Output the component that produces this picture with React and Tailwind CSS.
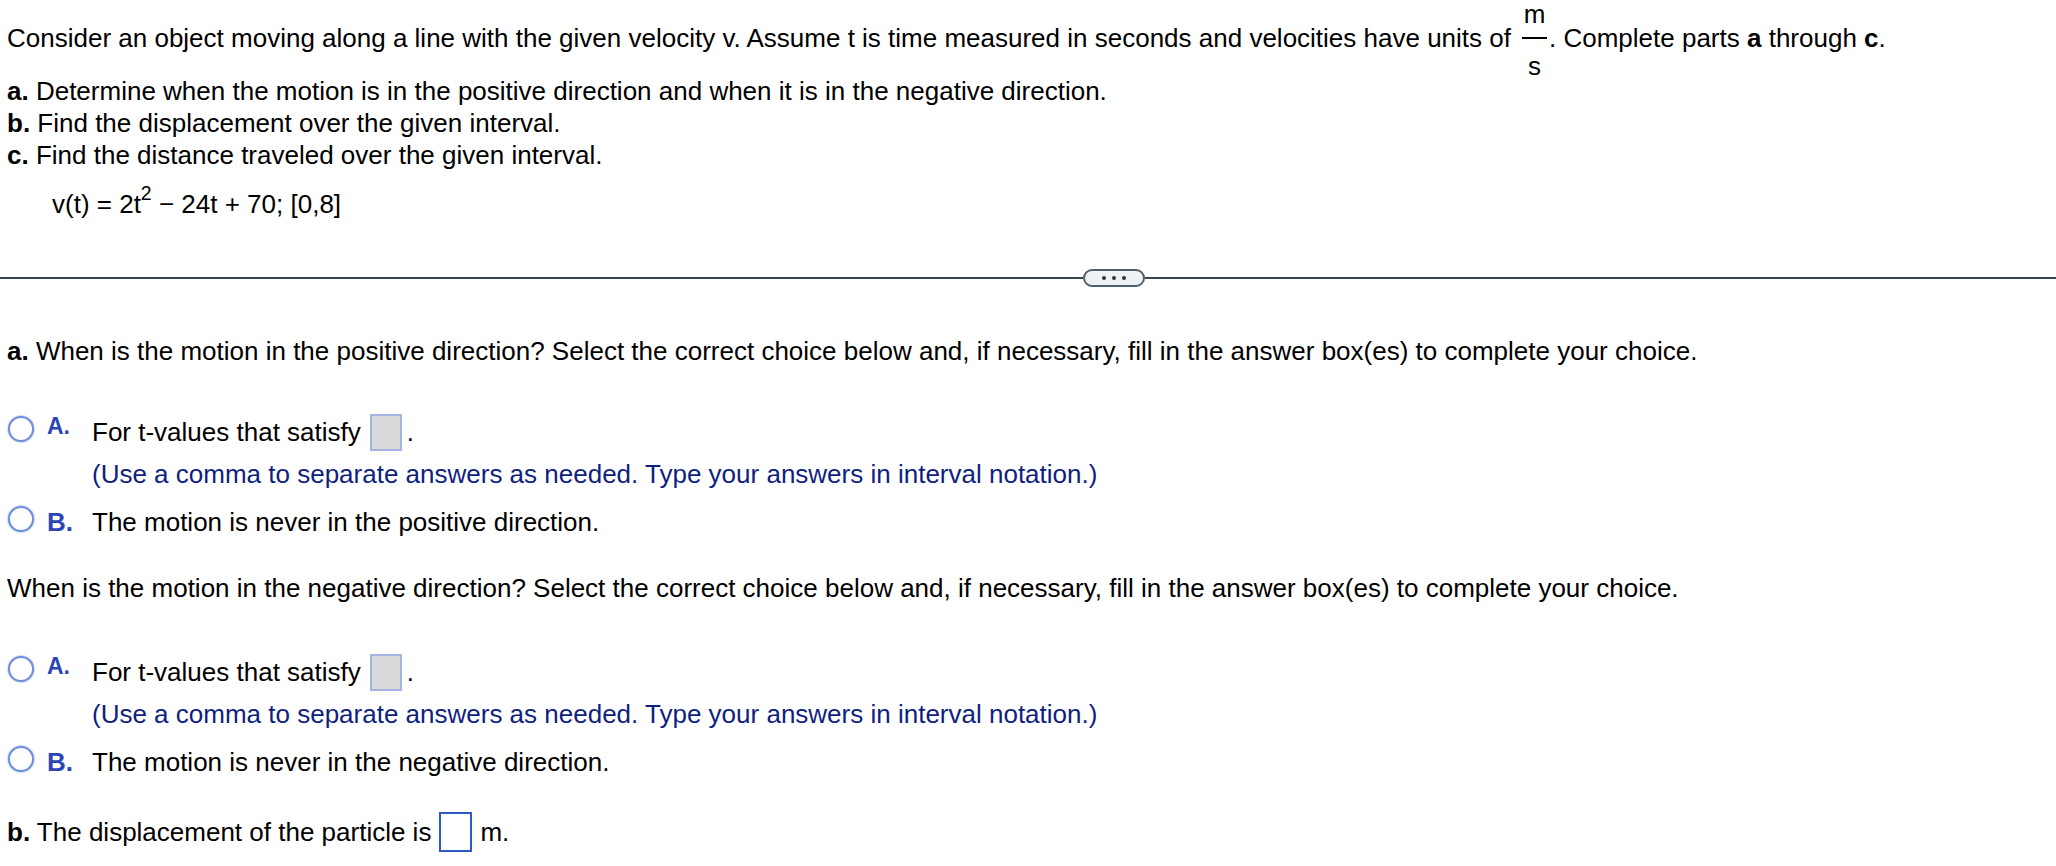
import React from 'react';

const Radio = () => (
    <span className="mb-[6px] ml-[1px] block h-[26px] w-[26px] shrink-0 rounded-full border-[2.5px] border-[#7090da] bg-white shadow-[0_0_1.5px_0.5px_rgba(90,120,210,0.5)]" />
);

const GrayBox = () => (
    <span className="ml-[9px] block h-[37px] w-[32px] shrink-0 border-2 border-[#a3b4e2] bg-[#d9d9d9]" />
);

const ChoiceA = () => (
    <>
        <div className="flex items-center pl-[7px]">
            <Radio />
            <span className="mb-[12px] ml-[13px] w-[45px] text-[23px] font-bold text-[#2d44b5]">A.</span>
            <span>For t-values that satisfy</span>
            <GrayBox />
            <span className="ml-[5px]">.</span>
        </div>
        <p className="mt-[4px] pl-[92px] text-[#0f1f80]">
            (Use a comma to separate answers as needed. Type your answers in interval notation.)
        </p>
    </>
);

const ChoiceB = ({ text }) => (
    <div className="mt-[16px] flex items-center pl-[7px]">
        <Radio />
        <span className="ml-[13px] w-[45px] font-bold text-[#2d44b5]">B.</span>
        <span>{text}</span>
    </div>
);

export default function App() {
    return (
        <div className="h-[866px] w-full overflow-hidden bg-white text-[26px] leading-[32px] text-black font-['Liberation_Sans',Arial,sans-serif]">
            {/* question stem */}
            <div className="pl-[7px] pt-[2px]">
                <p>
                    Consider an object moving along a line with the given velocity v. Assume t is time measured in seconds and velocities have units of
                    <span className="ml-[11px] mr-[2px] inline-flex flex-col items-center align-[24px]">
                        <span className="leading-[24px]">m</span>
                        <span className="mt-[11px] block h-[2px] w-[25px] bg-black" />
                        <span className="mt-[19px] leading-[16px]">s</span>
                    </span>
                    . Complete parts <b>a</b> through <b>c</b>.
                </p>
                <div className="mt-[1px]">
                    <p><b>a.</b> Determine when the motion is in the positive direction and when it is in the negative direction.</p>
                    <p><b>b.</b> Find the displacement over the given interval.</p>
                    <p><b>c.</b> Find the distance traveled over the given interval.</p>
                </div>
                <p className="ml-[45px] mt-[17px]">
                    v(t) = 2t<sup className="top-[-0.65em]">2</sup> − 24t + 70; [0,8]
                </p>
            </div>

            {/* divider */}
            <div className="mt-[49px] flex h-[18px] items-center">
                <div className="h-[2px] w-[1083px] bg-[#37474f]" />
                <div className="flex h-[18px] w-[62px] items-center justify-center gap-[6px] rounded-full border-2 border-[#4f5f6d] bg-[#eef2f4]">
                    <span className="h-[4px] w-[4px] rounded-full bg-[#333]" />
                    <span className="h-[4px] w-[4px] rounded-full bg-[#333]" />
                    <span className="h-[4px] w-[4px] rounded-full bg-[#333]" />
                </div>
                <div className="h-[2px] flex-1 bg-[#37474f]" />
            </div>

            <p className="mt-[48px] pl-[7px]">
                <b>a.</b> When is the motion in the positive direction? Select the correct choice below and, if necessary, fill in the answer box(es) to complete your choice.
            </p>

            <div className="mt-[43px]">
                <ChoiceA />
                <ChoiceB text="The motion is never in the positive direction." />
            </div>

            <p className="mt-[34px] pl-[7px]">
                When is the motion in the negative direction? Select the correct choice below and, if necessary, fill in the answer box(es) to complete your choice.
            </p>

            <div className="mt-[46px]">
                <ChoiceA />
                <ChoiceB text="The motion is never in the negative direction." />
            </div>

            <div className="mt-[34px] flex items-center pl-[7px]">
                <span><b>b.</b> The displacement of the particle is</span>
                <span className="ml-[8px] block h-[40px] w-[33px] border-2 border-[#2b5cc4] bg-white" />
                <span className="ml-[8px]">m.</span>
            </div>
        </div>
    );
}
